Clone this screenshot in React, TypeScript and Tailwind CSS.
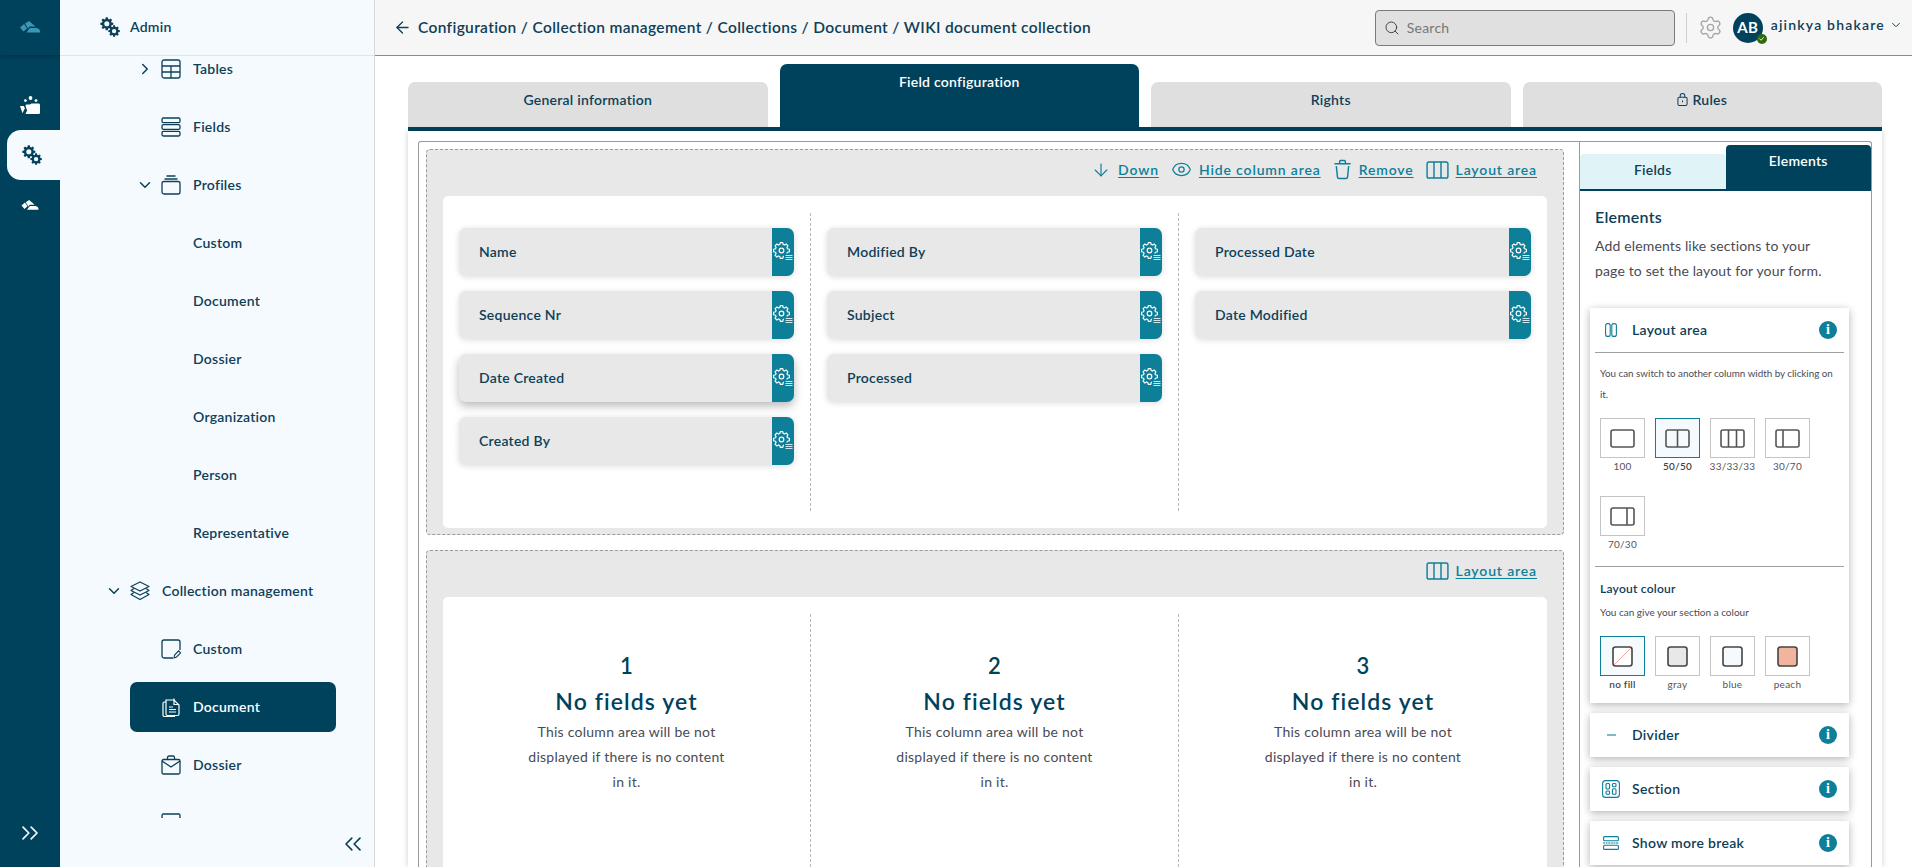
import type { ReactNode } from "react";
import {
  ArrowDown,
  ArrowLeft,
  ChevronDown,
  ChevronRight,
  ChevronsLeft,
  ChevronsRight,
  Eye,
  Search,
  Settings,
} from "lucide-react";

// gear outline, used by the admin icons and the field settings button
function gearPath(cx: number, cy: number, ro: number, ri: number, teeth: number) {
  const pts: string[] = [];
  const step = (Math.PI * 2) / teeth;
  for (let i = 0; i < teeth; i++) {
    const a = i * step;
    const at = (r: number, o: number) =>
      `${(cx + r * Math.cos(a + o)).toFixed(2)} ${(cy + r * Math.sin(a + o)).toFixed(2)}`;
    pts.push(at(ri, -step * 0.36), at(ro, -step * 0.2), at(ro, step * 0.2), at(ri, step * 0.36));
  }
  return `M${pts.join("L")}Z`;
}

function circlePath(cx: number, cy: number, r: number) {
  return `M${cx - r} ${cy}a${r} ${r} 0 1 0 ${r * 2} 0a${r} ${r} 0 1 0 ${-r * 2} 0Z`;
}

function Gears({ className }: { className?: string }) {
  return (
    <svg viewBox="0 0 22 22" className={className} fill="currentColor" fillRule="evenodd">
      <path d={gearPath(7.5, 7.5, 7.2, 5.4, 8) + circlePath(7.5, 7.5, 2.8)} />
      <path d={gearPath(15.5, 15.5, 6.4, 4.8, 8) + circlePath(15.5, 15.5, 2.4)} />
    </svg>
  );
}

function FieldGear() {
  return (
    <svg viewBox="0 0 20 20" className="h-[20px] w-[20px]" fill="none" stroke="white">
      <path d={gearPath(8.5, 8.5, 8, 6.2, 8)} strokeWidth="1.2" strokeLinejoin="round" />
      <circle cx="8.5" cy="8.5" r="2.3" strokeWidth="1.2" />
      <rect x="11" y="11.5" width="9" height="8" fill="#0e7f99" stroke="none" />
      <path d="M12.5 13.5h7M12.5 15.5h7M12.5 17.5h7" stroke="#cfe6ec" strokeWidth="1.2" />
    </svg>
  );
}

function CloudLogo({ className }: { className?: string }) {
  return (
    <svg viewBox="0 0 20 13" className={className} fill="currentColor">
      <path d="M0 6.5 4 3l3 4.5-3.5 3z" />
      <path d="M5 2.6 9 0l6.5 5.6H9.6L8 7.6z" />
      <path d="M8.6 8.6 10 7h6.6c2 .4 3.4 1.8 3.4 3.4v1.2H6.5z" />
    </svg>
  );
}

function PeopleFolder({ className }: { className?: string }) {
  return (
    <svg viewBox="0 0 20 18" className={className} fill="currentColor">
      <circle cx="10.5" cy="2" r="1.9" />
      <circle cx="5.4" cy="4.6" r="1.4" />
      <circle cx="16" cy="4.6" r="1.4" />
      <path d="M5.5 10c0-.9.6-1.500 1.500-1.500h3L11.400 7.500h7c.9 0 1.600.7 1.600 1.600v7.300c0 1-.7 1.600-1.600 1.600H5.500l1.600-3.600z" />
      <path d="M0 10h3.800l1 2.200-2.300 5z" />
    </svg>
  );
}

function TableIcon() {
  return (
    <svg viewBox="0 0 20 20" className="h-[20px] w-[20px]" fill="none" stroke="currentColor" strokeWidth="1.3">
      <rect x="1" y="1" width="18" height="18" rx="2" />
      <path d="M1 7h18M1 13h18M10 7v12" />
    </svg>
  );
}

function FieldsIcon() {
  return (
    <svg viewBox="0 0 20 20" className="h-[20px] w-[20px]" fill="none" stroke="currentColor" strokeWidth="1.3">
      <rect x="1" y="1" width="18" height="4.6" rx="1.4" />
      <rect x="1" y="7.7" width="18" height="4.6" rx="1.4" />
      <rect x="1" y="14.4" width="18" height="4.6" rx="1.4" />
    </svg>
  );
}

function ProfilesIcon() {
  return (
    <svg viewBox="0 0 20 20" className="h-[20px] w-[20px]" fill="none" stroke="currentColor" strokeWidth="1.3">
      <rect x="1" y="6.5" width="18" height="12.5" rx="2" />
      <path d="M3.5 4h13M5.5 1h9" />
    </svg>
  );
}

function StackIcon() {
  return (
    <svg viewBox="0 0 20 20" className="h-[20px] w-[20px]" fill="none" stroke="currentColor" strokeWidth="1.25" strokeLinejoin="round">
      <path d="m10 1 9 4.500-9 4.500-9-4.500z" />
      <path d="m4 7.500-3 2 9 4.500 9-4.500-3-2" />
      <path d="m4 11.500-3 2 9 5 9-5-3-2" />
    </svg>
  );
}

function CustomIcon() {
  return (
    <svg viewBox="0 0 20 20" className="h-[20px] w-[20px]" fill="none" stroke="currentColor" strokeWidth="1.3">
      <path d="M12 19H3a2 2 0 0 1-2-2V3a2 2 0 0 1 2-2h14a2 2 0 0 1 2 2v8" />
      <path d="m13 19 .6-3 4-4.2 2 2-4 4.2z" strokeWidth="1.1" />
    </svg>
  );
}

function DocumentIcon() {
  return (
    <svg viewBox="0 0 20 20" className="h-[20px] w-[20px]" fill="none" stroke="currentColor" strokeWidth="1.2">
      <path d="M5 3h8l5 5v9a1.5 1.5 0 0 1-1.500 1.500H6.500A1.500 1.500 0 0 1 5 17z" />
      <path d="M13 1.500V7.500h5M8 10h4M8 12.500h7M8 15h7" />
      <path d="M5 5H3.500A1.500 1.500 0 0 0 2 6.500V18a1.500 1.500 0 0 0 1.500 1.500H14" />
    </svg>
  );
}

function DossierIcon() {
  return (
    <svg viewBox="0 0 20 20" className="h-[20px] w-[20px]" fill="none" stroke="currentColor" strokeWidth="1.3">
      <rect x="1" y="4.500" width="18" height="14.500" rx="1.500" />
      <path d="M1 6l9 6 9-6M6.500 4.500V2.500a1.500 1.500 0 0 1 1.500-1.500h4a1.500 1.500 0 0 1 1.500 1.500v2" />
    </svg>
  );
}

function TrashIcon() {
  return (
    <svg viewBox="0 0 20 22" className="h-[21px] w-[19px]" fill="none" stroke="currentColor" strokeWidth="1.500">
      <path d="M1.500 5h17M7 5V2.500c0-.6.4-1 1-1h4c.6 0 1 .4 1 1V5" />
      <path d="m3.500 7.500 1.200 11.500c.1.900.8 1.500 1.700 1.500h7.200c.9 0 1.600-.6 1.700-1.500L16.500 7.500" />
    </svg>
  );
}

function ThreeColumns() {
  return (
    <svg viewBox="0 0 24 19" className="h-[18px] w-[23px]" fill="none" stroke="currentColor" strokeWidth="1.500">
      <rect x="1" y="1" width="22" height="17" rx="2" />
      <path d="M8.300 1v17M15.700 1v17" />
    </svg>
  );
}

function InfoDot() {
  return (
    <span className="flex h-[18px] w-[18px] items-center justify-center rounded-full bg-[#0e7f99] font-[family-name:'Liberation_Serif',serif] text-[14px] font-bold leading-none text-white">
      i
    </span>
  );
}

interface NavRow {
  label: string;
  icon?: ReactNode;
  chevron?: "right" | "down";
  active?: boolean;
  outdent?: boolean;
}

const navRows: NavRow[] = [
  { label: "Tables", icon: <TableIcon />, chevron: "right" },
  { label: "Fields", icon: <FieldsIcon /> },
  { label: "Profiles", icon: <ProfilesIcon />, chevron: "down" },
  { label: "Custom" },
  { label: "Document" },
  { label: "Dossier" },
  { label: "Organization" },
  { label: "Person" },
  { label: "Representative" },
  { label: "Collection management", icon: <StackIcon />, chevron: "down", outdent: true },
  { label: "Custom", icon: <CustomIcon /> },
  { label: "Document", icon: <DocumentIcon />, active: true },
  { label: "Dossier", icon: <DossierIcon /> },
  { label: "Organization", icon: <FieldsIcon /> },
];

function Rail() {
  return (
    <aside className="flex w-[60px] shrink-0 flex-col bg-[#00425c] text-white">
      <div className="flex h-[55px] items-center justify-center shadow-[0_3px_4px_rgba(0,0,0,0.18)]">
        <CloudLogo className="h-[13px] w-[20px] text-[#3a97b6]" />
      </div>
      <div className="mt-[40px] flex h-[20px] items-center justify-center">
        <PeopleFolder className="h-[18px] w-[20px]" />
      </div>
      <div className="ml-[7px] mt-[15px] flex h-[50px] items-center justify-center rounded-l-[14px] bg-[#f5faff] pr-[3px] text-[#00425c]">
        <Gears className="h-[20px] w-[20px]" />
      </div>
      <div className="mt-[15px] flex h-[20px] items-center justify-center">
        <CloudLogo className="h-[11px] w-[18px]" />
      </div>
      <div className="mt-auto flex h-[44px] items-start justify-center">
        <ChevronsRight className="-mt-[4px] h-[28px] w-[28px]" strokeWidth={1.4} />
      </div>
    </aside>
  );
}

function Sidebar() {
  return (
    <aside className="flex w-[315px] shrink-0 flex-col border-r border-[#d3d9de] bg-[#f5faff] text-[#0d4058]">
      <div className="flex h-[56px] shrink-0 items-center gap-[10px] border-b border-[#d8e6ee] pb-[2px] pl-[40px]">
        <Gears className="h-[20px] w-[20px]" />
        <span className="text-[14px] font-semibold">Admin</span>
      </div>
      <nav className="min-h-0 flex-1 overflow-hidden">
        <ul className="-mt-[12px] flex flex-col gap-[8px] pl-[70px]">
          {navRows.map((row, i) => (
            <li
              key={i}
              className={
                row.active
                  ? "flex h-[50px] w-[206px] items-center rounded-[7px] bg-[#00425c] text-white"
                  : row.outdent
                    ? "-ml-[31px] flex h-[50px] items-center"
                    : "flex h-[50px] items-center"
              }
            >
              <span className="flex w-[30px] shrink-0 justify-center">
                {row.chevron === "right" && <ChevronRight className="h-[18px] w-[18px]" strokeWidth={2} />}
                {row.chevron === "down" && <ChevronDown className="h-[18px] w-[18px]" strokeWidth={2} />}
              </span>
              <span className="flex w-[22px] shrink-0 justify-center">{row.icon}</span>
              <span className="ml-[11px] -translate-y-[1px] text-[14px] font-semibold">{row.label}</span>
            </li>
          ))}
        </ul>
      </nav>
      <div className="flex h-[49px] shrink-0 justify-end pr-[7px] pt-[12px]">
        <ChevronsLeft className="h-[28px] w-[28px]" strokeWidth={1.4} />
      </div>
    </aside>
  );
}

function TopBar() {
  return (
    <header className="flex h-[56px] shrink-0 items-center border-b border-[#8a8a8a] bg-[#f6f6f6] pl-[18px] pr-[9px] text-[#0d4058]">
      <ArrowLeft className="h-[19px] w-[19px]" strokeWidth={1.6} />
      <span className="ml-[6px] text-[15.500px] font-semibold tracking-[0.35px]">
        Configuration / Collection management / Collections / Document / WIKI document collection
      </span>
      <div className="ml-auto flex h-[36px] w-[300px] items-center gap-[7px] rounded-[4px] border border-[#7a7a7a] bg-[#e0e0e0] pl-[8px] text-[14px] text-[#777]">
        <Search className="h-[16px] w-[16px] text-[#444]" strokeWidth={1.5} />
        Search
      </div>
      <span className="ml-[11px] h-[30px] w-[1px] bg-[#cfcfcf]" />
      <Settings className="ml-[11px] h-[25px] w-[25px] text-[#a6a6a6]" strokeWidth={1.3} />
      <span className="relative ml-[10px] flex h-[30px] w-[30px] items-center justify-center rounded-full bg-[#00425c] text-[15px] font-bold text-white">
        AB
        <span className="absolute -bottom-[1px] -right-[4px] flex h-[10px] w-[10px] items-center justify-center rounded-full bg-[#2f6b0c]">
          <svg viewBox="0 0 8 8" className="h-[7px] w-[7px]" fill="none" stroke="white" strokeWidth="1">
            <path d="m1.500 4 2 2 3-3.500" />
          </svg>
        </span>
      </span>
      <span className="ml-[8px] -translate-y-[3px] text-[14px] font-semibold tracking-[1.2px]">ajinkya bhakare</span>
      <ChevronDown className="ml-[4px] h-[14px] w-[14px] -translate-y-[3px]" strokeWidth={1.6} />
    </header>
  );
}

function TabsRow() {
  const gray = "flex-1 h-[45px] rounded-t-[7px] bg-[#dfdfdf] pt-[7px] text-center text-[14px] font-semibold text-[#0d4058]";
  return (
    <div className="flex shrink-0 items-end gap-3 pt-[8px]">
      <div className={gray}>General information</div>
      <div className="-mb-[4px] h-[67px] flex-1 rounded-t-[7px] bg-[#00425c] pt-[7px] text-center text-[14px] font-semibold text-white">
        Field configuration
      </div>
      <div className={gray}>Rights</div>
      <div className={gray}>
        <span className="inline-flex items-center gap-[4px]">
          <svg viewBox="0 0 12 14" className="h-[13px] w-[11px]" fill="none" stroke="currentColor" strokeWidth="1.100">
            <rect x="1" y="4.500" width="10" height="9" rx="1.500" />
            <path d="M3.500 4.500V3a2.500 2.500 0 0 1 5 0v1.500M6 8v2" />
          </svg>
          Rules
        </span>
      </div>
    </div>
  );
}

function ToolLink({ icon, label }: { icon: ReactNode; label: string }) {
  return (
    <span className="flex items-center gap-[7px] text-[#0e7f99]">
      {icon}
      <span className="text-[14px] font-semibold tracking-[0.85px] underline underline-offset-2">{label}</span>
    </span>
  );
}

function FieldCard({ label, raised }: { label: string; raised?: boolean }) {
  return (
    <div
      className={
        raised
          ? "flex h-[48px] items-center justify-between overflow-hidden rounded-[7px] bg-[#e8e8e8] shadow-[0_4px_10px_rgba(0,0,0,0.28)]"
          : "flex h-[48px] items-center justify-between overflow-hidden rounded-[7px] bg-[#e8e8e8] shadow-[0_1px_6px_rgba(0,0,0,0.14)]"
      }
    >
      <span className="-translate-y-[1px] pl-[20px] text-[14px] font-semibold text-[#0d4058]">{label}</span>
      <span className="flex h-full w-[22px] items-center justify-center bg-[#0e7f99]">
        <FieldGear />
      </span>
    </div>
  );
}

const filledColumns = [
  ["Name", "Sequence Nr", "Date Created", "Created By"],
  ["Modified By", "Subject", "Processed"],
  ["Processed Date", "Date Modified"],
];

function FilledArea() {
  return (
    <section className="rounded-[4px] border border-dashed border-[#9a9a9a] bg-[#e8e8e8] px-4 pb-[6px]">
      <div className="flex h-[46px] items-center justify-end gap-[12px] pb-[7px] pr-[10px]">
        <ToolLink icon={<ArrowDown className="h-[20px] w-[20px]" strokeWidth={1.4} />} label="Down" />
        <ToolLink icon={<Eye className="h-[21px] w-[21px]" strokeWidth={1.4} />} label="Hide column area" />
        <ToolLink icon={<TrashIcon />} label="Remove" />
        <ToolLink icon={<ThreeColumns />} label="Layout area" />
      </div>
      <div className="grid grid-cols-3 rounded-[5px] bg-white py-[17px]">
        {filledColumns.map((col, i) => (
          <div
            key={i}
            className={
              i < 2
                ? "flex h-[298px] flex-col gap-[15px] border-r border-dashed border-[#b5b5b5] px-4 pt-[15px]"
                : "flex h-[298px] flex-col gap-[15px] px-4 pt-[15px]"
            }
          >
            {col.map((f) => (
              <FieldCard key={f} label={f} raised={f === "Date Created"} />
            ))}
          </div>
        ))}
      </div>
    </section>
  );
}

function EmptyArea() {
  return (
    <section className="rounded-[4px] border border-dashed border-[#9a9a9a] bg-[#e8e8e8] px-4">
      <div className="flex h-[46px] items-center justify-end pb-[7px] pr-[10px]">
        <ToolLink icon={<ThreeColumns />} label="Layout area" />
      </div>
      <div className="grid grid-cols-3 rounded-[5px] bg-white py-[17px]">
        {[1, 2, 3].map((n) => (
          <div
            key={n}
            className={
              n < 3
                ? "flex h-[298px] flex-col items-center border-r border-dashed border-[#b5b5b5] pt-[38px] text-center"
                : "flex h-[298px] flex-col items-center pt-[38px] text-center"
            }
          >
            <span className="text-[22px] font-semibold leading-[28px] text-[#00425c]">{n}</span>
            <span className="mt-[6px] text-[23px] font-semibold leading-[30px] tracking-[1.1px] text-[#00425c]">No fields yet</span>
            <p className="mt-[3px] text-[14px] leading-[25px] text-[#4a4a55]">
              This column area will be not
              <br />
              displayed if there is no content
              <br />
              in it.
            </p>
          </div>
        ))}
      </div>
    </section>
  );
}

function Tile({ label, selected, children }: { label: string; selected?: boolean; children: ReactNode }) {
  return (
    <div className="flex w-[45px] flex-col items-center">
      <div
        className={
          selected
            ? "flex h-[40px] w-[45px] items-center justify-center border border-[#0e7f99] bg-[#f5faff]"
            : "flex h-[40px] w-[45px] items-center justify-center border border-[#c4c4c4]"
        }
      >
        {children}
      </div>
      <span className={selected ? "mt-[1px] whitespace-nowrap text-[10px] font-semibold text-[#444]" : "mt-[1px] whitespace-nowrap text-[10px] text-[#555]"}>
        {label}
      </span>
    </div>
  );
}

function LayoutGlyph({ lines }: { lines: number[] }) {
  return (
    <svg viewBox="0 0 25 19" className="h-[19px] w-[25px]" fill="none" stroke="#555" strokeWidth="1.600">
      <rect x="1" y="1" width="23" height="17" rx="2" />
      {lines.map((x) => (
        <path key={x} d={`M${x} 1v17`} />
      ))}
    </svg>
  );
}

function Swatch({ fill, slash }: { fill: string; slash?: boolean }) {
  return (
    <svg viewBox="0 0 21 21" className="h-[21px] w-[21px]">
      <rect x="1" y="1" width="19" height="19" rx="2.500" fill={fill} stroke="#444" strokeWidth="1.600" />
      {slash && <path d="M2 19 19 2" stroke="#f5a3a3" strokeWidth="1" />}
    </svg>
  );
}

function ElementCard({ icon, label }: { icon: ReactNode; label: string }) {
  return (
    <div className="flex h-[44px] items-center bg-white pr-[12px] shadow-[0_2px_8px_rgba(0,0,0,0.3)]">
      <span className="flex w-[42px] justify-center">{icon}</span>
      <span className="-translate-y-[1px] text-[14px] font-semibold tracking-[0.3px] text-[#0d4058]">{label}</span>
      <span className="ml-auto">
        <InfoDot />
      </span>
    </div>
  );
}

function ElementsPanel() {
  return (
    <div className="w-[291px] shrink-0 text-[#0d4058]">
      <div className="flex h-[49px] items-end border-b-2 border-[#00425c]">
        <div className="h-[35px] flex-1 rounded-t-[4px] bg-[#e0f3f7] pt-[5px] text-center text-[14px] font-semibold">Fields</div>
        <div className="h-[44px] flex-1 rounded-t-[4px] bg-[#00425c] pt-[5px] text-center text-[14px] font-semibold text-white">Elements</div>
      </div>
      <div className="px-[15px] pt-[15px]">
        <h3 className="text-[16px] font-semibold leading-[22px]">Elements</h3>
        <p className="mt-[5px] max-w-[235px] text-[14px] leading-[25px] tracking-[0.15px] text-[#4a4a55]">
          Add elements like sections to your page to set the layout for your form.
        </p>
      </div>
      <div className="ml-[10px] mt-[25px] flex w-[259px] flex-col gap-[10px]">
        <div className="bg-white shadow-[0_2px_8px_rgba(0,0,0,0.3)]">
          <div className="flex h-[44px] items-center pr-[12px]">
            <span className="flex w-[42px] justify-center">
              <svg viewBox="0 0 12 14" className="h-[14px] w-[12px]" fill="none" stroke="#0e7f99" strokeWidth="1.100">
                <rect x="0.600" y="0.600" width="4.600" height="12.800" rx="2" />
                <rect x="6.800" y="0.600" width="4.600" height="12.800" rx="2" />
              </svg>
            </span>
            <span className="-translate-y-[1px] text-[14px] font-semibold tracking-[0.3px]">Layout area</span>
            <span className="ml-auto">
              <InfoDot />
            </span>
          </div>
          <div className="mx-[5px] border-t border-[#a0a0a0] px-[5px] pb-[14px]">
            <p className="mt-[10px] text-[9.800px] leading-[21px] tracking-normal text-[#4a4a55]">
              You can switch to another column width by clicking on it.
            </p>
            <div className="mt-[13px] flex flex-wrap gap-x-[10px] gap-y-[22px]">
              <Tile label="100"><LayoutGlyph lines={[]} /></Tile>
              <Tile label="50/50" selected><LayoutGlyph lines={[12.5]} /></Tile>
              <Tile label="33/33/33"><LayoutGlyph lines={[8.5, 16.5]} /></Tile>
              <Tile label="30/70"><LayoutGlyph lines={[8]} /></Tile>
              <Tile label="70/30"><LayoutGlyph lines={[17]} /></Tile>
            </div>
          </div>
          <div className="mx-[5px] border-t border-[#a0a0a0] px-[5px] pb-[11px]">
            <h4 className="mt-[13px] text-[12px] font-semibold leading-[18px]">Layout colour</h4>
            <p className="mt-[5px] text-[10px] leading-[18px] tracking-normal text-[#4a4a55]">You can give your section a colour</p>
            <div className="mt-[15px] flex gap-[10px]">
              <Tile label="no fill" selected><Swatch fill="#ffffff" slash /></Tile>
              <Tile label="gray"><Swatch fill="#e8e8e8" /></Tile>
              <Tile label="blue"><Swatch fill="#f5faff" /></Tile>
              <Tile label="peach"><Swatch fill="#f2b49c" /></Tile>
            </div>
          </div>
        </div>
        <ElementCard icon={<span className="h-[2px] w-[9px] bg-[#7fb9c8]" />} label="Divider" />
        <ElementCard
          icon={
            <svg viewBox="0 0 18 18" className="h-[18px] w-[18px]" fill="none" stroke="#0e7f99" strokeWidth="1.100">
              <rect x="0.600" y="0.600" width="16.800" height="16.800" rx="3" />
              <rect x="4" y="3.500" width="3.600" height="5.500" rx="1" />
              <rect x="4" y="11" width="3.600" height="3.200" rx="1" />
              <rect x="10.400" y="3.500" width="3.600" height="3.200" rx="1" />
              <rect x="10.400" y="8.700" width="3.600" height="5.500" rx="1" />
            </svg>
          }
          label="Section"
        />
        <ElementCard
          icon={
            <svg viewBox="0 0 16 14" className="h-[14px] w-[16px]" fill="none" stroke="#0e7f99" strokeWidth="1.100">
              <rect x="0.600" y="0.600" width="14.800" height="4.200" rx="1" />
              <rect x="0.600" y="9.200" width="14.800" height="4.200" rx="1" />
              <path d="M0 7h16" strokeDasharray="2 0.600" />
            </svg>
          }
          label="Show more break"
        />
      </div>
    </div>
  );
}

export default function App() {
  return (
    <div className="flex h-screen overflow-hidden bg-white font-[family-name:Lato,sans-serif] tracking-[0.25px]">
      <Rail />
      <Sidebar />
      <main className="flex min-w-0 flex-1 flex-col">
        <TopBar />
        <div className="flex min-h-0 flex-1 flex-col pl-[33px] pr-[30px]">
          <TabsRow />
          <div className="h-[4px] shrink-0 bg-[#00425c]" />
          <div className="min-h-0 flex-1 pl-[10px] pr-[10px] pt-[10px] shadow-[0_0_6px_rgba(0,0,0,0.2)]">
            <div className="flex h-full overflow-hidden rounded-tl-[3px] rounded-tr-[3px] border border-b-0 border-[#9a9a9a]">
              <div className="flex min-w-0 flex-1 flex-col gap-[15px] border-r border-[#9a9a9a] pl-[7px] pr-[15px] pt-[7px]">
                <FilledArea />
                <EmptyArea />
              </div>
              <ElementsPanel />
            </div>
          </div>
        </div>
      </main>
    </div>
  );
}
